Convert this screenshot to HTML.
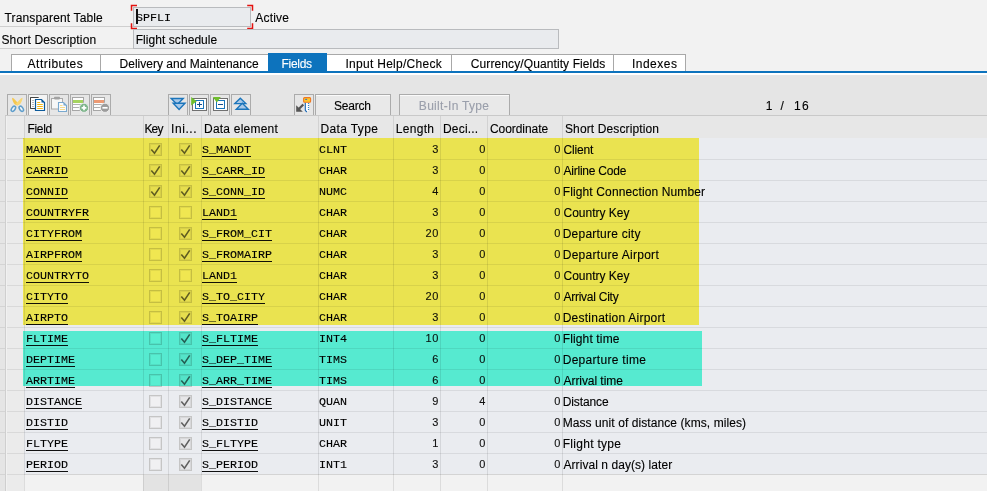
<!DOCTYPE html><html><head><meta charset="utf-8"><title>SPFLI</title><style>html,body{margin:0;padding:0}
body{width:987px;height:491px;overflow:hidden;background:#f2f2f2;position:relative;font-family:"Liberation Sans",sans-serif;font-size:12px;color:#000;-webkit-text-stroke-width:0.12px;}
.a{position:absolute;white-space:nowrap}
.lbl{position:absolute;white-space:nowrap;font-size:12px;line-height:16px;color:#000}
.line{position:absolute;height:1px;background:#cfcfcf}
.inp{position:absolute;box-sizing:border-box;border:1px solid #b9bbbe;background:#e9ebee}
.tab{position:absolute;top:54px;height:17px;box-sizing:border-box;background:#fff;border:1px solid #a8a8a8;border-bottom:none}
.panel{position:absolute;left:0;top:75px;width:987px;height:416px;background:#e5e5e5}
.btn{position:absolute;top:94px;height:22px;width:20px;box-sizing:border-box;border:1px solid #ababab;background:#e6e6e6}
.btn.on{background:#f4f4f4}
.btn svg{position:absolute;left:-1px;top:-1px}
.tbtn{position:absolute;top:94px;height:22px;box-sizing:border-box;border:1px solid #ababab;background:#e9e9e9;box-shadow:inset 0 1px 0 #fafafa;text-align:center;font-size:12px;line-height:20px;white-space:nowrap}
.hdr{position:absolute;left:5px;top:115px;width:982px;height:23px;background:#e7e7e7;border-top:1px solid #c9c9c9;box-sizing:border-box}
.hdr span{position:absolute;top:5px;font-size:12px;line-height:16px;white-space:nowrap;color:#000}
.vl{position:absolute;width:1px;background:rgba(0,0,0,0.09)}
.rowsbg{position:absolute;left:24px;top:138px;width:963px;height:336px;background:#eaecf0}
.row{position:absolute;left:0;width:987px;height:21px;box-sizing:border-box;border-bottom:1px solid rgba(0,0,0,0.075)}
.row span{position:absolute;white-space:nowrap}
.m{font-family:"Liberation Mono",monospace;font-size:11.67px;line-height:12px;top:5px;color:#000;-webkit-text-stroke-width:0.12px}
.u{border-bottom:1px solid #111;}
.n{font-size:11px;top:3px;line-height:14px;color:#111;letter-spacing:0.7px;margin-right:-0.7px}
.s{font-size:12px;top:3px;line-height:16px;color:#000}
.cb{width:13px;height:13px;box-sizing:border-box;border:1px solid #c5c5c5;background:#f0f0f2;box-shadow:inset 0 0 0 1px rgba(0,0,0,0.06)}
.cb.on{background:#e6e6e8}
.cb svg{position:absolute;left:-1px;top:-1px}
.hl{position:absolute;mix-blend-mode:multiply}
</style></head><body>
<span class="lbl" style="left:4px;top:10px;letter-spacing:0.14px;margin-left:0.5px">Transparent Table</span>
<div class="line" style="left:0;top:26px;width:133px"></div>
<div class="inp" style="left:133px;top:7px;width:118px;height:20px"></div>
<span class="a" style="left:136px;top:11px;font-family:'Liberation Mono',monospace;font-size:11.67px;line-height:14px">SPFLI</span>
<div class="a" style="left:136px;top:9px;width:2px;height:15px;background:#111"></div>
<svg class="a" style="left:130px;top:4px" width="125" height="26" viewBox="0 0 125 26"><path d="M7 1.5 H1.5 V6.8 M1.5 19.2 V24.5 H7 M117.2 1.5 H122.5 V6.8 M122.5 19.2 V24.5 H117.2" fill="none" stroke="#e3120f" stroke-width="1.5"/></svg>
<span class="lbl" style="left:256px;top:10px;letter-spacing:0.22px;margin-left:-0.8px">Active</span>
<span class="lbl" style="left:3px;top:32px;letter-spacing:0.17px;margin-left:-1.6px">Short Description</span>
<div class="line" style="left:0;top:48px;width:133px"></div>
<div class="inp" style="left:133px;top:29px;width:426px;height:20px"></div>
<span class="lbl" style="left:136px;top:32px;letter-spacing:0.06px;margin-left:-0.3px">Flight schedule</span>

<div class="tab" style="left:11px;width:90px"></div>
<div class="tab" style="left:100px;width:169px"></div>
<div class="tab" style="left:326px;width:126px"></div>
<div class="tab" style="left:451px;width:163px"></div>
<div class="tab" style="left:613px;width:73px"></div>
<div class="a" style="left:268px;top:53px;width:59px;height:18px;background:#0d73bd"></div>
<span class="lbl" style="left:27px;top:56px;letter-spacing:0.50px;margin-left:0.6px">Attributes</span>
<span class="lbl" style="left:120px;top:56px;letter-spacing:0.02px;margin-left:-0.5px">Delivery and Maintenance</span>
<span class="lbl" style="left:282px;top:56px;color:#fff;letter-spacing:-0.29px;margin-left:-0.5px">Fields</span>
<span class="lbl" style="left:346px;top:56px;letter-spacing:0.28px;margin-left:-0.5px">Input Help/Check</span>
<span class="lbl" style="left:471px;top:56px;letter-spacing:0.10px;margin-left:-0.2px">Currency/Quantity Fields</span>
<span class="lbl" style="left:633px;top:56px;letter-spacing:0.48px;margin-left:-1.0px">Indexes</span>
<div class="a" style="left:0;top:71px;width:987px;height:2px;background:#0d73bd"></div>
<div class="a" style="left:0;top:73px;width:987px;height:2px;background:#fff"></div>
<div class="panel"></div>

<div class="btn " style="left:7px"><svg width="20" height="22" viewBox="7 94 20 22">
<path d="M12 97.7 L13.5 98.3 L18.8 103.8 L17.3 105.6 L15 104.6 C13.4 102.8 12.3 100.4 12 97.7 Z" fill="#f5c74e"/>
<path d="M22.6 97.7 L21.1 98.3 L15.8 103.8 L17.3 105.6 L19.6 104.6 C21.2 102.8 22.3 100.4 22.6 97.7 Z" fill="#f8d674"/>
<ellipse cx="13.4" cy="108.8" rx="1.7" ry="2.9" transform="rotate(35 13.4 108.8)" fill="#f1f5f8" stroke="#5f9ecb" stroke-width="1.5"/>
<ellipse cx="21.3" cy="108.8" rx="1.7" ry="2.9" transform="rotate(-35 21.3 108.8)" fill="#f1f5f8" stroke="#5f9ecb" stroke-width="1.5"/>
</svg></div>
<div class="btn on" style="left:28px"><svg width="20" height="22" viewBox="28 94 20 22">
<path d="M38.5 97.5 H30.5 V108.5 H34" fill="#fff" stroke="#444" stroke-width="1"/>
<rect x="30.5" y="97.5" width="8" height="11" fill="#fff" stroke="none"/>
<path d="M38.5 97.5 H30.5 V108.5 H35" fill="none" stroke="#444" stroke-width="1"/>
<path d="M32 100.5h2M32 102.5h2M32 104.5h2M32 106.5h2" stroke="#bbb" stroke-width="1"/>
<path d="M35.5 99.5 H41.5 L44.5 102.5 V110.5 H35.5 Z" fill="#fff" stroke="#0d5a9a" stroke-width="1.2"/>
<path d="M41.5 99.5 L44.5 102.5 H41.5 Z" fill="#0d5a9a"/>
<path d="M37.2 102.5h3M37.2 104.5h5.6M37.2 106.5h5.6M37.2 108.5h5.6" stroke="#f5b916" stroke-width="1.1"/>
</svg></div>
<div class="btn " style="left:49px"><svg width="20" height="22" viewBox="49 94 20 22">
<rect x="51.5" y="98.5" width="11" height="10.5" fill="#f7f7f7" stroke="#a9a9a9" stroke-width="1"/>
<rect x="54" y="96.8" width="6" height="2.6" rx="0.8" fill="#a2a2a2"/>
<path d="M58.5 102.5 H63.5 L66.5 105.5 V111.5 H58.5 Z" fill="#fbfbfb" stroke="#79a9cf" stroke-width="1.1"/>
<path d="M63.5 102.5 L66.5 105.5 H63.5 Z" fill="#79a9cf"/>
<path d="M60 105.5h2.5M60 107.5h5M60 109.5h5" stroke="#f6dc8e" stroke-width="1"/>
</svg></div>
<div class="btn " style="left:70px"><svg width="20" height="22" viewBox="70 94 20 22">
<rect x="72.5" y="97.5" width="11" height="13" fill="#fdfdfd" stroke="#a6a6a6" stroke-width="1"/>
<rect x="73" y="100" width="10" height="3" fill="#a5d35f"/>
<path d="M72.5 104.5h11M72.5 107.5h11" stroke="#b0b0b0" stroke-width="1"/>
<circle cx="84" cy="107.8" r="4.6" fill="#7fb68c" stroke="#ececec" stroke-width="1"/>
<circle cx="84" cy="107.8" r="3" fill="#7fb68c" stroke="#e7f1e9" stroke-width="0"/>
<path d="M81.6 107.8h4.8M84 105.4v4.8" stroke="#fff" stroke-width="1.7"/>
</svg></div>
<div class="btn " style="left:91px"><svg width="20" height="22" viewBox="91 94 20 22">
<rect x="93.5" y="97.5" width="11" height="13" fill="#fdfdfd" stroke="#a6a6a6" stroke-width="1"/>
<rect x="94" y="100" width="10" height="3" fill="#ec9a74"/>
<path d="M93.5 104.5h11M93.5 107.5h11" stroke="#b0b0b0" stroke-width="1"/>
<circle cx="105" cy="107.8" r="4.6" fill="#9c9c9c" stroke="#ececec" stroke-width="1"/>
<path d="M102.4 107.8h5.2" stroke="#fff" stroke-width="1.7"/>
</svg></div>
<div class="btn " style="left:168px"><svg width="20" height="22" viewBox="168 94 20 22">
<path d="M171.2 98.5 H183.2 L177.2 104.4 Z" fill="#a9c9e8" stroke="#1b75bb" stroke-width="1.4" stroke-linejoin="miter"/>
<path d="M173.2 103.3 H185 L179.1 109.4 Z" fill="#a9c9e8" stroke="#1b75bb" stroke-width="1.4" stroke-linejoin="miter"/>
</svg></div>
<div class="btn " style="left:189px"><svg width="20" height="22" viewBox="189 94 20 22">
<rect x="192.5" y="98.5" width="14" height="12" fill="#fff" stroke="#707070" stroke-width="1"/>
<rect x="195.5" y="100.5" width="8" height="8" fill="#fff" stroke="#1b75bb" stroke-width="1"/>
<path d="M197 104.5h5M199.5 102v5" stroke="#1a4f8a" stroke-width="1"/>
<path d="M191.2 97 L196.8 101.2 L191.2 105.4 Z" fill="#6fbe2c"/>
</svg></div>
<div class="btn " style="left:210px"><svg width="20" height="22" viewBox="210 94 20 22">
<rect x="213.5" y="98.5" width="14" height="12" fill="#fff" stroke="#707070" stroke-width="1"/>
<rect x="216.5" y="100.5" width="8" height="8" fill="#fff" stroke="#1b75bb" stroke-width="1"/>
<path d="M218 104.5h5" stroke="#1a4f8a" stroke-width="1"/>
<path d="M212.8 97 H220.8 L216.8 102.6 Z" fill="#6fbe2c"/>
</svg></div>
<div class="btn " style="left:231px"><svg width="20" height="22" viewBox="231 94 20 22">
<path d="M234.8 103.6 H245.8 L240.3 98.2 Z" fill="#a9c9e8" stroke="#1b75bb" stroke-width="1.4"/>
<path d="M236.3 109.2 H248.3 L242.3 103.3 Z" fill="#a9c9e8" stroke="#1b75bb" stroke-width="1.4"/>
</svg></div>
<div class="btn " style="left:294px"><svg width="20" height="22" viewBox="294 94 20 22">
<path d="M303.3 104.5 L298.8 109" stroke="#555" stroke-width="2.3"/>
<path d="M296.2 105.2 V111.7 H302.8 Z" fill="#555"/>
<path d="M305.3 102.6 V110.4 L306.8 112 L308.7 110.4 V102.6 Z" fill="#fff"/>
<path d="M305.3 102.6 V110.4 L306.8 112" fill="none" stroke="#1464b4" stroke-width="1.1"/>
<path d="M308.5 103v8" stroke="#2f86cf" stroke-width="1.2" stroke-dasharray="1 1"/>
<rect x="303.6" y="97.6" width="7" height="4.6" rx="1" fill="#fcc82e" stroke="#f07820" stroke-width="1.1"/>
<path d="M305.2 99.4h1.9" stroke="#3a6fc0" stroke-width="1"/>
</svg></div>
<div class="tbtn" style="left:315px;width:76px"></div>
<span class="lbl" style="left:334px;top:98px;letter-spacing:-0.22px;margin-left:0.0px">Search</span>
<div class="tbtn" style="left:399px;width:111px"></div>
<span class="lbl" style="left:419px;top:98px;color:#9a9fab;letter-spacing:0.31px;margin-left:-0.2px">Built-In Type</span>
<span class="lbl" style="left:766px;top:98px;letter-spacing:0.00px;margin-left:-0.2px">1</span><span class="lbl" style="left:780px;top:98px;letter-spacing:0.00px;margin-left:0.6px">/</span><span class="lbl" style="left:794px;top:98px;letter-spacing:1.28px;margin-left:0.0px">16</span>

<div class="hdr">
<span style="left:23px;letter-spacing:-0.28px;margin-left:-0.6px">Field</span>
<span style="left:140px;letter-spacing:-0.88px;margin-left:-0.5px">Key</span>
<span style="left:166px;letter-spacing:0.58px;margin-left:0.0px">Ini...</span>
<span style="left:199px;letter-spacing:0.22px;margin-left:0.0px">Data element</span>
<span style="left:316px;letter-spacing:0.36px;margin-left:-0.5px">Data Type</span>
<span style="left:391px;letter-spacing:0.32px;margin-left:-0.3px">Length</span>
<span style="left:438px;letter-spacing:0.19px;margin-left:0.0px">Deci...</span>
<span style="left:485px;letter-spacing:-0.07px;margin-left:0.0px">Coordinate</span>
<span style="left:560px;letter-spacing:0.12px;margin-left:0.0px">Short Description</span>
</div>
<div class="a" style="left:5px;top:116px;width:19px;height:375px;background:#ebebeb"></div>
<div class="rowsbg"></div>
<div class="a" style="left:24px;top:475px;width:963px;height:16px;background:#f2f2f2"></div>
<div class="a" style="left:143px;top:475px;width:58px;height:16px;background:#e3e3e3"></div>
<div class="a" style="left:6px;top:138px;width:18px;height:1px;background:#cdcdcd"></div>

<div class="row" style="top:139px">
<span class="m u" style="left:26px">MANDT</span>
<span class="cb on" style="left:149px;top:4px"><svg width="13" height="13" viewBox="0 0 13 13"><path d="M2.3 6.4 L5.5 10.2 L10.7 2.4" fill="none" stroke="#606060" stroke-width="1.6"/></svg></span>
<span class="cb on" style="left:179px;top:4px"><svg width="13" height="13" viewBox="0 0 13 13"><path d="M2.3 6.4 L5.5 10.2 L10.7 2.4" fill="none" stroke="#606060" stroke-width="1.6"/></svg></span>
<span class="m u" style="left:202px">S_MANDT</span>
<span class="m" style="left:319px">CLNT</span>
<span class="n" style="right:548.5px">3</span>
<span class="n" style="right:501.5px">0</span>
<span class="n" style="right:426.5px">0</span>
<span class="s" style="left:563px;letter-spacing:-0.16px;margin-left:0.5px">Client</span>
</div>
<div class="row" style="top:160px">
<span class="m u" style="left:26px">CARRID</span>
<span class="cb on" style="left:149px;top:4px"><svg width="13" height="13" viewBox="0 0 13 13"><path d="M2.3 6.4 L5.5 10.2 L10.7 2.4" fill="none" stroke="#606060" stroke-width="1.6"/></svg></span>
<span class="cb on" style="left:179px;top:4px"><svg width="13" height="13" viewBox="0 0 13 13"><path d="M2.3 6.4 L5.5 10.2 L10.7 2.4" fill="none" stroke="#606060" stroke-width="1.6"/></svg></span>
<span class="m u" style="left:202px">S_CARR_ID</span>
<span class="m" style="left:319px">CHAR</span>
<span class="n" style="right:548.5px">3</span>
<span class="n" style="right:501.5px">0</span>
<span class="n" style="right:426.5px">0</span>
<span class="s" style="left:563px;letter-spacing:-0.23px;margin-left:0.5px">Airline Code</span>
</div>
<div class="row" style="top:181px">
<span class="m u" style="left:26px">CONNID</span>
<span class="cb on" style="left:149px;top:4px"><svg width="13" height="13" viewBox="0 0 13 13"><path d="M2.3 6.4 L5.5 10.2 L10.7 2.4" fill="none" stroke="#606060" stroke-width="1.6"/></svg></span>
<span class="cb on" style="left:179px;top:4px"><svg width="13" height="13" viewBox="0 0 13 13"><path d="M2.3 6.4 L5.5 10.2 L10.7 2.4" fill="none" stroke="#606060" stroke-width="1.6"/></svg></span>
<span class="m u" style="left:202px">S_CONN_ID</span>
<span class="m" style="left:319px">NUMC</span>
<span class="n" style="right:548.5px">4</span>
<span class="n" style="right:501.5px">0</span>
<span class="n" style="right:426.5px">0</span>
<span class="s" style="left:563px;letter-spacing:0.13px;margin-left:-0.3px">Flight Connection Number</span>
</div>
<div class="row" style="top:202px">
<span class="m u" style="left:26px">COUNTRYFR</span>
<span class="cb" style="left:149px;top:4px"></span>
<span class="cb" style="left:179px;top:4px"></span>
<span class="m u" style="left:202px">LAND1</span>
<span class="m" style="left:319px">CHAR</span>
<span class="n" style="right:548.5px">3</span>
<span class="n" style="right:501.5px">0</span>
<span class="n" style="right:426.5px">0</span>
<span class="s" style="left:563px;letter-spacing:0.00px;margin-left:0.5px">Country Key</span>
</div>
<div class="row" style="top:223px">
<span class="m u" style="left:26px">CITYFROM</span>
<span class="cb" style="left:149px;top:4px"></span>
<span class="cb on" style="left:179px;top:4px"><svg width="13" height="13" viewBox="0 0 13 13"><path d="M2.3 6.4 L5.5 10.2 L10.7 2.4" fill="none" stroke="#606060" stroke-width="1.6"/></svg></span>
<span class="m u" style="left:202px">S_FROM_CIT</span>
<span class="m" style="left:319px">CHAR</span>
<span class="n" style="right:548.5px">20</span>
<span class="n" style="right:501.5px">0</span>
<span class="n" style="right:426.5px">0</span>
<span class="s" style="left:563px;letter-spacing:0.23px;margin-left:-0.3px">Departure city</span>
</div>
<div class="row" style="top:244px">
<span class="m u" style="left:26px">AIRPFROM</span>
<span class="cb" style="left:149px;top:4px"></span>
<span class="cb on" style="left:179px;top:4px"><svg width="13" height="13" viewBox="0 0 13 13"><path d="M2.3 6.4 L5.5 10.2 L10.7 2.4" fill="none" stroke="#606060" stroke-width="1.6"/></svg></span>
<span class="m u" style="left:202px">S_FROMAIRP</span>
<span class="m" style="left:319px">CHAR</span>
<span class="n" style="right:548.5px">3</span>
<span class="n" style="right:501.5px">0</span>
<span class="n" style="right:426.5px">0</span>
<span class="s" style="left:563px;letter-spacing:0.29px;margin-left:-0.3px">Departure Airport</span>
</div>
<div class="row" style="top:265px">
<span class="m u" style="left:26px">COUNTRYTO</span>
<span class="cb" style="left:149px;top:4px"></span>
<span class="cb" style="left:179px;top:4px"></span>
<span class="m u" style="left:202px">LAND1</span>
<span class="m" style="left:319px">CHAR</span>
<span class="n" style="right:548.5px">3</span>
<span class="n" style="right:501.5px">0</span>
<span class="n" style="right:426.5px">0</span>
<span class="s" style="left:563px;letter-spacing:0.00px;margin-left:0.5px">Country Key</span>
</div>
<div class="row" style="top:286px">
<span class="m u" style="left:26px">CITYTO</span>
<span class="cb" style="left:149px;top:4px"></span>
<span class="cb on" style="left:179px;top:4px"><svg width="13" height="13" viewBox="0 0 13 13"><path d="M2.3 6.4 L5.5 10.2 L10.7 2.4" fill="none" stroke="#606060" stroke-width="1.6"/></svg></span>
<span class="m u" style="left:202px">S_TO_CITY</span>
<span class="m" style="left:319px">CHAR</span>
<span class="n" style="right:548.5px">20</span>
<span class="n" style="right:501.5px">0</span>
<span class="n" style="right:426.5px">0</span>
<span class="s" style="left:563px;letter-spacing:-0.26px;margin-left:0.5px">Arrival City</span>
</div>
<div class="row" style="top:307px">
<span class="m u" style="left:26px">AIRPTO</span>
<span class="cb" style="left:149px;top:4px"></span>
<span class="cb on" style="left:179px;top:4px"><svg width="13" height="13" viewBox="0 0 13 13"><path d="M2.3 6.4 L5.5 10.2 L10.7 2.4" fill="none" stroke="#606060" stroke-width="1.6"/></svg></span>
<span class="m u" style="left:202px">S_TOAIRP</span>
<span class="m" style="left:319px">CHAR</span>
<span class="n" style="right:548.5px">3</span>
<span class="n" style="right:501.5px">0</span>
<span class="n" style="right:426.5px">0</span>
<span class="s" style="left:563px;letter-spacing:0.24px;margin-left:-0.3px">Destination Airport</span>
</div>
<div class="row" style="top:328px">
<span class="m u" style="left:26px">FLTIME</span>
<span class="cb" style="left:149px;top:4px"></span>
<span class="cb on" style="left:179px;top:4px"><svg width="13" height="13" viewBox="0 0 13 13"><path d="M2.3 6.4 L5.5 10.2 L10.7 2.4" fill="none" stroke="#606060" stroke-width="1.6"/></svg></span>
<span class="m u" style="left:202px">S_FLTIME</span>
<span class="m" style="left:319px">INT4</span>
<span class="n" style="right:548.5px">10</span>
<span class="n" style="right:501.5px">0</span>
<span class="n" style="right:426.5px">0</span>
<span class="s" style="left:563px;letter-spacing:0.14px;margin-left:-0.3px">Flight time</span>
</div>
<div class="row" style="top:349px">
<span class="m u" style="left:26px">DEPTIME</span>
<span class="cb" style="left:149px;top:4px"></span>
<span class="cb on" style="left:179px;top:4px"><svg width="13" height="13" viewBox="0 0 13 13"><path d="M2.3 6.4 L5.5 10.2 L10.7 2.4" fill="none" stroke="#606060" stroke-width="1.6"/></svg></span>
<span class="m u" style="left:202px">S_DEP_TIME</span>
<span class="m" style="left:319px">TIMS</span>
<span class="n" style="right:548.5px">6</span>
<span class="n" style="right:501.5px">0</span>
<span class="n" style="right:426.5px">0</span>
<span class="s" style="left:563px;letter-spacing:0.29px;margin-left:-0.3px">Departure time</span>
</div>
<div class="row" style="top:370px">
<span class="m u" style="left:26px">ARRTIME</span>
<span class="cb" style="left:149px;top:4px"></span>
<span class="cb on" style="left:179px;top:4px"><svg width="13" height="13" viewBox="0 0 13 13"><path d="M2.3 6.4 L5.5 10.2 L10.7 2.4" fill="none" stroke="#606060" stroke-width="1.6"/></svg></span>
<span class="m u" style="left:202px">S_ARR_TIME</span>
<span class="m" style="left:319px">TIMS</span>
<span class="n" style="right:548.5px">6</span>
<span class="n" style="right:501.5px">0</span>
<span class="n" style="right:426.5px">0</span>
<span class="s" style="left:563px;letter-spacing:-0.06px;margin-left:0.5px">Arrival time</span>
</div>
<div class="row" style="top:391px">
<span class="m u" style="left:26px">DISTANCE</span>
<span class="cb" style="left:149px;top:4px"></span>
<span class="cb on" style="left:179px;top:4px"><svg width="13" height="13" viewBox="0 0 13 13"><path d="M2.3 6.4 L5.5 10.2 L10.7 2.4" fill="none" stroke="#606060" stroke-width="1.6"/></svg></span>
<span class="m u" style="left:202px">S_DISTANCE</span>
<span class="m" style="left:319px">QUAN</span>
<span class="n" style="right:548.5px">9</span>
<span class="n" style="right:501.5px">4</span>
<span class="n" style="right:426.5px">0</span>
<span class="s" style="left:563px;letter-spacing:-0.11px;margin-left:-0.3px">Distance</span>
</div>
<div class="row" style="top:412px">
<span class="m u" style="left:26px">DISTID</span>
<span class="cb" style="left:149px;top:4px"></span>
<span class="cb on" style="left:179px;top:4px"><svg width="13" height="13" viewBox="0 0 13 13"><path d="M2.3 6.4 L5.5 10.2 L10.7 2.4" fill="none" stroke="#606060" stroke-width="1.6"/></svg></span>
<span class="m u" style="left:202px">S_DISTID</span>
<span class="m" style="left:319px">UNIT</span>
<span class="n" style="right:548.5px">3</span>
<span class="n" style="right:501.5px">0</span>
<span class="n" style="right:426.5px">0</span>
<span class="s" style="left:563px;letter-spacing:0.08px;margin-left:-0.3px">Mass unit of distance (kms, miles)</span>
</div>
<div class="row" style="top:433px">
<span class="m u" style="left:26px">FLTYPE</span>
<span class="cb" style="left:149px;top:4px"></span>
<span class="cb on" style="left:179px;top:4px"><svg width="13" height="13" viewBox="0 0 13 13"><path d="M2.3 6.4 L5.5 10.2 L10.7 2.4" fill="none" stroke="#606060" stroke-width="1.6"/></svg></span>
<span class="m u" style="left:202px">S_FLTYPE</span>
<span class="m" style="left:319px">CHAR</span>
<span class="n" style="right:548.5px">1</span>
<span class="n" style="right:501.5px">0</span>
<span class="n" style="right:426.5px">0</span>
<span class="s" style="left:563px;letter-spacing:0.29px;margin-left:-0.3px">Flight type</span>
</div>
<div class="row" style="top:454px">
<span class="m u" style="left:26px">PERIOD</span>
<span class="cb" style="left:149px;top:4px"></span>
<span class="cb on" style="left:179px;top:4px"><svg width="13" height="13" viewBox="0 0 13 13"><path d="M2.3 6.4 L5.5 10.2 L10.7 2.4" fill="none" stroke="#606060" stroke-width="1.6"/></svg></span>
<span class="m u" style="left:202px">S_PERIOD</span>
<span class="m" style="left:319px">INT1</span>
<span class="n" style="right:548.5px">3</span>
<span class="n" style="right:501.5px">0</span>
<span class="n" style="right:426.5px">0</span>
<span class="s" style="left:563px;letter-spacing:0.06px;margin-left:0.5px">Arrival n day(s) later</span>
</div>
<div class="a" style="left:5px;top:116px;height:375px;width:1px;background:#cfcfcf"></div><div class="a" style="left:6px;top:116px;height:375px;width:1px;background:#f1f1f1"></div>
<div class="vl" style="left:24px;top:116px;height:375px"></div>
<div class="vl" style="left:143px;top:116px;height:375px"></div>
<div class="vl" style="left:168px;top:116px;height:375px"></div>
<div class="vl" style="left:201px;top:116px;height:375px"></div>
<div class="vl" style="left:318px;top:116px;height:375px"></div>
<div class="vl" style="left:393px;top:116px;height:375px"></div>
<div class="vl" style="left:440px;top:116px;height:375px"></div>
<div class="vl" style="left:487px;top:116px;height:375px"></div>
<div class="vl" style="left:562px;top:116px;height:375px"></div>
<div class="hl" style="left:23px;top:138px;width:676px;height:187px;background:#fff655"></div>
<div class="hl" style="left:23px;top:331px;width:679px;height:55px;background:#5dfddd"></div>

</body></html>
